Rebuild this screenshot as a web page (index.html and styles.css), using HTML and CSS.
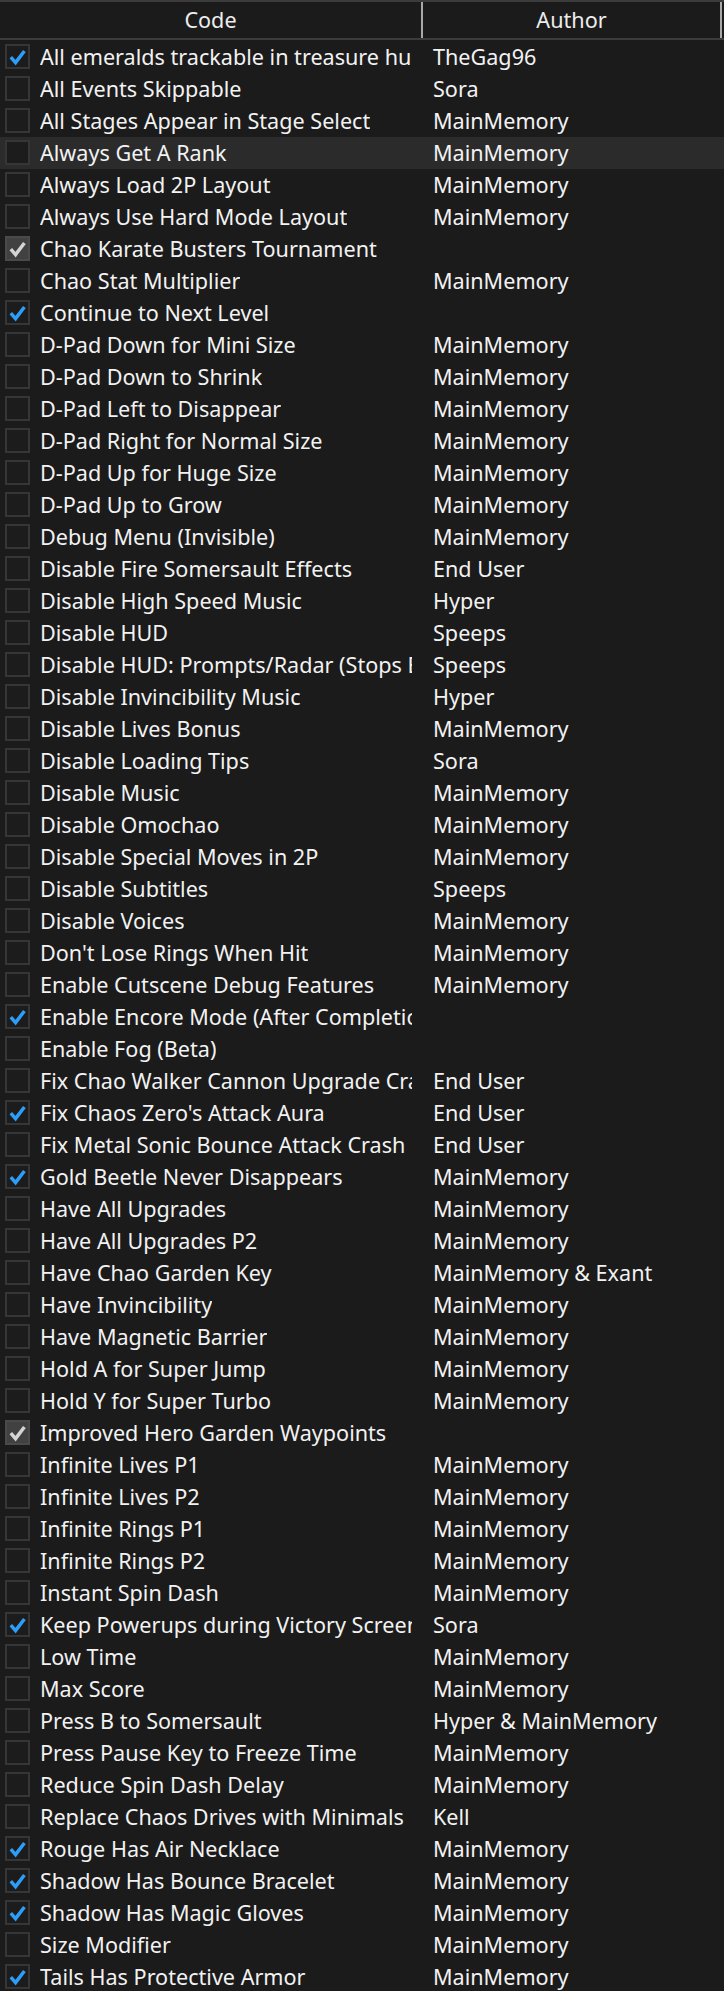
FILE: index.html
```html
<!DOCTYPE html>
<html>
<head>
<meta charset="utf-8">
<link rel="stylesheet" href="styles.css">
</head>
<body>
<div class="grid">
  <div class="header">
    <div class="hcell code-h">Code</div>
    <div class="hcell author-h">Author</div>
  </div>
  <div class="rows" id="rows"></div>
</div>
<svg width="0" height="0" class="defs">
  <defs>
    <symbol id="chk" viewBox="0 0 24 24"><path d="M5 12.6 L10 18.4 L19.2 6.2" fill="none" stroke-width="3.6" stroke-linecap="butt" stroke-linejoin="miter"/></symbol>
  </defs>
</svg>
<script src="app.js"></script>
</body>
</html>
```
FILE: styles.css
```css
html, body {
  margin: 0;
  padding: 0;
  background: #1b1b1b;
}
body {
  font-family: "Noto Sans", "Open Sans", sans-serif;
  font-size: 21.6px;
  color: #f2f2f2;
  width: 724px;
  overflow: hidden;
}
.defs {
  position: absolute;
  width: 0;
  height: 0;
}
.grid {
  width: 724px;
}
.header {
  display: grid;
  grid-template-columns: 421px 2px 297px 2px;
  height: 36px;
  border-top: 2px solid #3b3b3b;
  border-bottom: 2px solid #3b3b3b;
  background: #1b1b1b;
}
.hcell {
  display: flex;
  align-items: center;
  justify-content: center;
  line-height: 36px;
  color: #ededed;
}
.code-h { grid-column: 1; }
.author-h { grid-column: 3; }
.header::before {
  content: "";
  grid-column: 2;
  grid-row: 1;
  background: #a8a8a8;
}
.header::after {
  content: "";
  grid-column: 4;
  grid-row: 1;
  background: #a8a8a8;
}
.rows {
  padding-top: 1px;
}
.row {
  display: grid;
  grid-template-columns: 423px 1fr;
  height: 32px;
  align-items: center;
}
.row.sel {
  background: #2b2b2b;
}
.code {
  display: flex;
  align-items: center;
  gap: 10px;
  padding-left: 5px;
  padding-right: 11px;
  overflow: hidden;
  white-space: nowrap;
}
.code .label {
  overflow: hidden;
  white-space: nowrap;
  line-height: 32px;
}
.author {
  padding-left: 10px;
  line-height: 32px;
  white-space: nowrap;
}
.box {
  flex: 0 0 auto;
  width: 21px;
  height: 21px;
  border: 2px solid #363636;
  background: #1c1c1c;
  margin-top: -2px;
  display: flex;
  align-items: center;
  justify-content: center;
}
.box svg {
  width: 23px;
  height: 23px;
  flex: 0 0 auto;
}
.box.on svg { stroke: #2e9df5; }
.box.grey {
  background: #414141;
  border-color: #4a4a4a;
}
.box.grey svg { stroke: #d4d4d4; }
```
FILE: app.js
```js
var data = [
["All emeralds trackable in treasure hunting","TheGag96","b"],
["All Events Skippable","Sora"],
["All Stages Appear in Stage Select","MainMemory"],
["Always Get A Rank","MainMemory","","sel"],
["Always Load 2P Layout","MainMemory"],
["Always Use Hard Mode Layout","MainMemory"],
["Chao Karate Busters Tournament","","g"],
["Chao Stat Multiplier","MainMemory"],
["Continue to Next Level","","b"],
["D-Pad Down for Mini Size","MainMemory"],
["D-Pad Down to Shrink","MainMemory"],
["D-Pad Left to Disappear","MainMemory"],
["D-Pad Right for Normal Size","MainMemory"],
["D-Pad Up for Huge Size","MainMemory"],
["D-Pad Up to Grow","MainMemory"],
["Debug Menu (Invisible)","MainMemory"],
["Disable Fire Somersault Effects","End User"],
["Disable High Speed Music","Hyper"],
["Disable HUD","Speeps"],
["Disable HUD: Prompts/Radar (Stops Emerald Radar)","Speeps"],
["Disable Invincibility Music","Hyper"],
["Disable Lives Bonus","MainMemory"],
["Disable Loading Tips","Sora"],
["Disable Music","MainMemory"],
["Disable Omochao","MainMemory"],
["Disable Special Moves in 2P","MainMemory"],
["Disable Subtitles","Speeps"],
["Disable Voices","MainMemory"],
["Don't Lose Rings When Hit","MainMemory"],
["Enable Cutscene Debug Features","MainMemory"],
["Enable Encore Mode (After Completion)","","b"],
["Enable Fog (Beta)",""],
["Fix Chao Walker Cannon Upgrade Crash","End User"],
["Fix Chaos Zero's Attack Aura","End User","b"],
["Fix Metal Sonic Bounce Attack Crash","End User"],
["Gold Beetle Never Disappears","MainMemory","b"],
["Have All Upgrades","MainMemory"],
["Have All Upgrades P2","MainMemory"],
["Have Chao Garden Key","MainMemory & Exant"],
["Have Invincibility","MainMemory"],
["Have Magnetic Barrier","MainMemory"],
["Hold A for Super Jump","MainMemory"],
["Hold Y for Super Turbo","MainMemory"],
["Improved Hero Garden Waypoints","","g"],
["Infinite Lives P1","MainMemory"],
["Infinite Lives P2","MainMemory"],
["Infinite Rings P1","MainMemory"],
["Infinite Rings P2","MainMemory"],
["Instant Spin Dash","MainMemory"],
["Keep Powerups during Victory Screen","Sora","b"],
["Low Time","MainMemory"],
["Max Score","MainMemory"],
["Press B to Somersault","Hyper & MainMemory"],
["Press Pause Key to Freeze Time","MainMemory"],
["Reduce Spin Dash Delay","MainMemory"],
["Replace Chaos Drives with Minimals","Kell"],
["Rouge Has Air Necklace","MainMemory","b"],
["Shadow Has Bounce Bracelet","MainMemory","b"],
["Shadow Has Magic Gloves","MainMemory","b"],
["Size Modifier","MainMemory"],
["Tails Has Protective Armor","MainMemory","b"]
];
var rows = document.getElementById("rows");
data.forEach(function (d) {
  var row = document.createElement("div");
  row.className = "row" + (d[3] ? " " + d[3] : "");
  var code = document.createElement("div");
  code.className = "code";
  var box = document.createElement("span");
  box.className = "box" + (d[2] === "b" ? " on" : d[2] === "g" ? " grey" : "");
  if (d[2]) {
    box.innerHTML = '<svg viewBox="0 0 24 24"><use href="#chk"/></svg>';
  }
  var label = document.createElement("span");
  label.className = "label";
  label.textContent = d[0];
  code.appendChild(box);
  code.appendChild(label);
  var author = document.createElement("div");
  author.className = "author";
  author.textContent = d[1];
  row.appendChild(code);
  row.appendChild(author);
  rows.appendChild(row);
});
```
